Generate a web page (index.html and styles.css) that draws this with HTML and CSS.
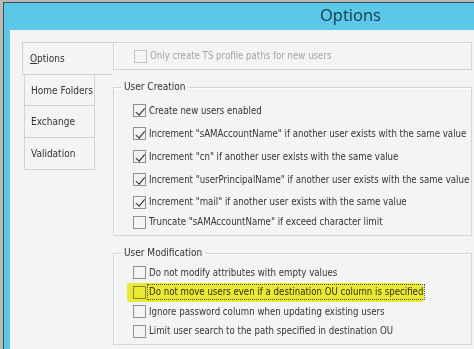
FILE: index.html
```html
<!DOCTYPE html>
<html>
<head>
<meta charset="utf-8">
<link rel="stylesheet" href="styles.css">
</head>
<body>
<div class="desk">
  <div class="window">
    <div class="titlebar"><span class="title">Options</span></div>
    <div class="client">
      <div class="tabs">
        <div class="tab selected"><span class="mn">O</span>ptions</div>
        <div class="tab">Home Folders</div>
        <div class="tab">Exchange</div>
        <div class="tab">Validation</div>
      </div>
      <div class="pages">
        <div class="tsbox">
          <div class="row disabled"><span class="cb"></span><span class="lbl">Only create TS profile paths for new users</span></div>
        </div>
        <div class="group creation">
          <div class="glabel">User Creation</div>
          <div class="row"><span class="cb checked"></span><span class="lbl">Create new users enabled</span></div>
          <div class="row"><span class="cb checked"></span><span class="lbl">Increment "sAMAccountName" if another user exists with the same value</span></div>
          <div class="row"><span class="cb checked"></span><span class="lbl">Increment "cn" if another user exists with the same value</span></div>
          <div class="row"><span class="cb checked"></span><span class="lbl">Increment "userPrincipalName" if another user exists with the same value</span></div>
          <div class="row r22"><span class="cb checked"></span><span class="lbl">Increment "mail" if another user exists with the same value</span></div>
          <div class="row r20"><span class="cb"></span><span class="lbl">Truncate "sAMAccountName" if exceed character limit</span></div>
        </div>
        <div class="group modification">
          <div class="glabel">User Modification</div>
          <div class="row"><span class="cb"></span><span class="lbl">Do not modify attributes with empty values</span></div>
          <div class="row marked"><span class="hl"></span><span class="cb"></span><span class="lbl focus">Do not move users even if a destination OU column is specified</span></div>
          <div class="row"><span class="cb"></span><span class="lbl">Ignore password column when updating existing users</span></div>
          <div class="row"><span class="cb"></span><span class="lbl">Limit user search to the path specified in destination OU</span></div>
        </div>
      </div>
    </div>
  </div>
</div>
</body>
</html>
```

FILE: styles.css
```css
* { box-sizing: border-box; }
html, body { margin: 0; padding: 0; }
body {
  width: 474px;
  height: 349px;
  overflow: hidden;
  background: #b9b9b9;
  font-family: "DejaVu Sans Condensed", "DejaVu Sans", sans-serif;
  font-stretch: condensed;
}
.desk {
  padding: 2px 0 0 3px;
  height: 349px;
}
.window {
  border-top: 1px solid #3b4d55;
  border-left: 1px solid #3b4d55;
  background: #5bc8e8;
  height: 347px;
  width: 700px;
}
.titlebar {
  height: 27px;
  display: flex;
  align-items: center;
  padding-left: 316px;
  padding-bottom: 3px;
}
.title {
  font-family: "Open Sans", sans-serif;
  font-stretch: normal;
  font-size: 16.5px;
  line-height: 1;
  color: #15364a;
}
.client {
  margin-left: 6px;
  background: #f4f4f4;
  height: 320px;
  display: flex;
  padding: 12px 0 0 12px;
  font-size: 9.6px;
  color: #333;
}
.tabs {
  display: flex;
  flex-direction: column;
  width: 91px;
}
.tab {
  margin-left: 2px;
  width: 71px;
  height: 32px;
  border: 1px solid #d2d2d2;
  border-top: none;
  display: flex;
  align-items: center;
  padding-left: 6px;
  color: #333;
  white-space: nowrap;
  font-size: 10px;
}
.tab.selected {
  margin-left: 0;
  width: 91px;
  height: 33px;
  border: 1px solid #d2d2d2;
  border-right: none;
  padding-left: 7px;
  background: #f4f4f4;
}
.tab:nth-child(2) { height: 31px; }
.mn { text-decoration: underline; }
.pages {
  width: 359px;
  display: flex;
  flex-direction: column;
}
.tsbox {
  height: 28px;
  border: 1px solid #d4d4d4;
  box-shadow: inset 1px 1px 0 #fff;
  display: flex;
  align-items: center;
  padding-left: 20px;
}
.group {
  position: relative;
  margin-top: 17px;
  border: 1px solid #d4d4d4;
  box-shadow: inset 1px 1px 0 #fff;
  padding-left: 19px;
}
.creation { height: 149px; padding-top: 11px; }
.modification { height: 92px; padding-top: 9px; }
.glabel {
  position: absolute;
  top: -8px;
  left: 7px;
  padding: 0 3px;
  background: #f4f4f4;
  line-height: 14px;
  font-size: 10px;
  color: #333;
}
.row {
  position: relative;
  display: flex;
  align-items: center;
  height: 23px;
}
.row.r22 { height: 22px; }
.row.r20 { height: 18px; }
.modification .row { height: 19.5px; }
.cb {
  width: 13px;
  height: 13px;
  border: 1px solid #8f8f8f;
  background: transparent;
  margin-right: 3px;
  flex: none;
  position: relative;
}
.cb.checked::after {
  content: "";
  position: absolute;
  left: 3.5px;
  top: 0.5px;
  width: 3.5px;
  height: 7.5px;
  border-right: 1.6px solid #262626;
  border-bottom: 1.6px solid #262626;
  transform: rotate(40deg);
}
.lbl { white-space: nowrap; line-height: 14px; }
.disabled .cb { border-color: #c4c4c4; }
.disabled .lbl { color: #a3a3a3; }
.focus {
  border: 1px dotted #555;
  padding: 0 1px;
  margin-left: -2px;
}
.hl {
  position: absolute;
  left: -6px;
  top: 0px;
  width: 297px;
  height: 19px;
  background: #f6f43a;
  border-radius: 3px 6px 4px 2px;
  mix-blend-mode: multiply;
  z-index: 2;
}
```
